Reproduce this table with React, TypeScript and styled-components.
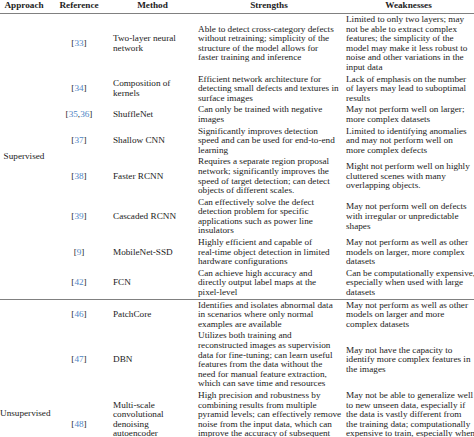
import React from 'react';
import styled, { createGlobalStyle } from 'styled-components';

const GlobalStyle = createGlobalStyle`
  html, body {
    margin: 0;
    padding: 0;
    background: #ffffff;
    overflow: hidden;
  }
  body {
    font-family: "Liberation Serif", "Times New Roman", serif;
    color: #222222;
  }
`;

const Table = styled.table`
  width: 474px;
  table-layout: fixed;
  border-collapse: collapse;
  font-size: 9.2px;
  line-height: 9.6px;
`;

const HeadCell = styled.th`
  font-weight: bold;
  text-align: center;
  padding: 0 2px 3px;
  line-height: 10px;
  border-bottom: 1px solid #808080;
  white-space: nowrap;
`;

const Row = styled.tr<{ $divider?: boolean }>`
  & > td {
    border-top: ${(p) => (p.$divider ? '1px solid #808080' : 'none')};
  }
`;

const Cell = styled.td<{ $align?: 'left' | 'center' }>`
  text-align: ${(p) => p.$align ?? 'left'};
  vertical-align: middle;
  padding: 1px 3px;
  white-space: nowrap;
`;

const GroupCell = styled.td`
  text-align: center;
  vertical-align: middle;
  padding: 0;
  white-space: nowrap;
`;

const RefLink = styled.span`
  color: #4f86c6;
`;

type Entry = {
  refs: string[];
  method: string[];
  strengths: string[];
  weaknesses: string[];
};

const supervised: Entry[] = [
  {
    refs: ['33'],
    method: ['Two-layer neural', 'network'],
    strengths: [
      'Able to detect cross-category defects',
      'without retraining; simplicity of the',
      'structure of the model allows for',
      'faster training and inference',
    ],
    weaknesses: [
      'Limited to only two layers; may',
      'not be able to extract complex',
      'features; the simplicity of the',
      'model may make it less robust to',
      'noise and other variations in the',
      'input data',
    ],
  },
  {
    refs: ['34'],
    method: ['Composition of', 'kernels'],
    strengths: [
      'Efficient network architecture for',
      'detecting small defects and textures in',
      'surface images',
    ],
    weaknesses: [
      'Lack of emphasis on the number',
      'of layers may lead to suboptimal',
      'results',
    ],
  },
  {
    refs: ['35', '36'],
    method: ['ShuffleNet'],
    strengths: ['Can only be trained with negative', 'images'],
    weaknesses: ['May not perform well on larger;', 'more complex datasets'],
  },
  {
    refs: ['37'],
    method: ['Shallow CNN'],
    strengths: [
      'Significantly improves detection',
      'speed and can be used for end-to-end',
      'learning',
    ],
    weaknesses: [
      'Limited to identifying anomalies',
      'and may not perform well on',
      'more complex defects',
    ],
  },
  {
    refs: ['38'],
    method: ['Faster RCNN'],
    strengths: [
      'Requires a separate region proposal',
      'network; significantly improves the',
      'speed of target detection; can detect',
      'objects of different scales.',
    ],
    weaknesses: [
      'Might not perform well on highly',
      'cluttered scenes with many',
      'overlapping objects.',
    ],
  },
  {
    refs: ['39'],
    method: ['Cascaded RCNN'],
    strengths: [
      'Can effectively solve the defect',
      'detection problem for specific',
      'applications such as power line',
      'insulators',
    ],
    weaknesses: [
      'May not perform well on defects',
      'with irregular or unpredictable',
      'shapes',
    ],
  },
  {
    refs: ['9'],
    method: ['MobileNet-SSD'],
    strengths: [
      'Highly efficient and capable of',
      'real-time object detection in limited',
      'hardware configurations',
    ],
    weaknesses: [
      'May not perform as well as other',
      'models on larger, more complex',
      'datasets',
    ],
  },
  {
    refs: ['42'],
    method: ['FCN'],
    strengths: [
      'Can achieve high accuracy and',
      'directly output label maps at the',
      'pixel-level',
    ],
    weaknesses: [
      'Can be computationally expensive,',
      'especially when used with large',
      'datasets',
    ],
  },
];

const unsupervised: Entry[] = [
  {
    refs: ['46'],
    method: ['PatchCore'],
    strengths: [
      'Identifies and isolates abnormal data',
      'in scenarios where only normal',
      'examples are available',
    ],
    weaknesses: [
      'May not perform as well as other',
      'models on larger and more',
      'complex datasets',
    ],
  },
  {
    refs: ['47'],
    method: ['DBN'],
    strengths: [
      'Utilizes both training and',
      'reconstructed images as supervision',
      'data for fine-tuning; can learn useful',
      'features from the data without the',
      'need for manual feature extraction,',
      'which can save time and resources',
    ],
    weaknesses: [
      'May not have the capacity to',
      'identify more complex features in',
      'the images',
    ],
  },
  {
    refs: ['48'],
    method: ['Multi-scale', 'convolutional', 'denoising', 'autoencoder', 'network'],
    strengths: [
      'High precision and robustness by',
      'combining results from multiple',
      'pyramid levels; can effectively remove',
      'noise from the input data, which can',
      'improve the accuracy of subsequent',
      'defect detection and localization',
      'tasks',
    ],
    weaknesses: [
      'May not be able to generalize well',
      'to new unseen data, especially if',
      'the data is vastly different from',
      'the training data; computationally',
      'expensive to train, especially when',
      'using deep architectures with many',
      'pyramid levels',
    ],
  },
  {
    refs: ['49'],
    method: ['Generative', 'adversarial', 'network'],
    strengths: [
      'Learns the distribution of normal',
      'samples and flags deviations as',
      'defects; does not require labelled',
      'defect images for training; can',
      'generate synthetic samples to',
      'augment small datasets and',
      'improve robustness',
    ],
    weaknesses: [
      'Training can be unstable and',
      'sensitive to hyperparameters;',
      'may suffer from mode collapse',
      'and produce false alarms on',
      'unusual but normal samples;',
      'requires careful tuning',
    ],
  },
];

const Lines = ({ lines }: { lines: string[] }) => (
  <>
    {lines.map((line, i) => (
      <React.Fragment key={i}>
        {i > 0 && <br />}
        {line}
      </React.Fragment>
    ))}
  </>
);

const Refs = ({ refs }: { refs: string[] }) => (
  <>
    [
    {refs.map((r, i) => (
      <React.Fragment key={r}>
        {i > 0 && ','}
        <RefLink>{r}</RefLink>
      </React.Fragment>
    ))}
    ]
  </>
);

const renderGroup = (label: string, entries: Entry[], divider: boolean) =>
  entries.map((entry, index) => (
    <Row key={entry.refs.join('-')} $divider={divider && index === 0}>
      {index === 0 && <GroupCell rowSpan={entries.length}>{label}</GroupCell>}
      <Cell $align="center">
        <Refs refs={entry.refs} />
      </Cell>
      <Cell>
        <Lines lines={entry.method} />
      </Cell>
      <Cell>
        <Lines lines={entry.strengths} />
      </Cell>
      <Cell>
        <Lines lines={entry.weaknesses} />
      </Cell>
    </Row>
  ));

const App = () => (
  <>
    <GlobalStyle />
    <Table>
      <colgroup>
        <col style={{ width: 48 }} />
        <col style={{ width: 62 }} />
        <col style={{ width: 85 }} />
        <col style={{ width: 148 }} />
        <col style={{ width: 131 }} />
      </colgroup>
      <thead>
        <tr>
          <HeadCell>Approach</HeadCell>
          <HeadCell>Reference</HeadCell>
          <HeadCell>Method</HeadCell>
          <HeadCell>Strengths</HeadCell>
          <HeadCell>Weaknesses</HeadCell>
        </tr>
      </thead>
      <tbody>
        {renderGroup('Supervised', supervised, false)}
        {renderGroup('Unsupervised', unsupervised, true)}
      </tbody>
    </Table>
  </>
);

export default App;
